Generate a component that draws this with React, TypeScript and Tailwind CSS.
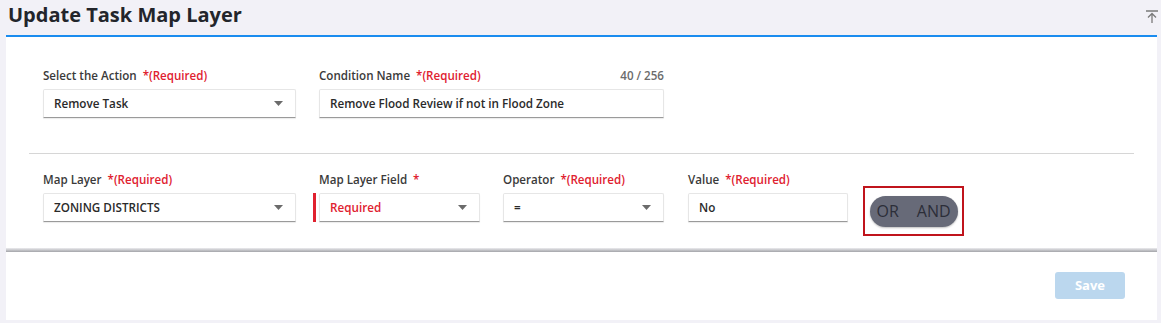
import React from 'react';

const font = { fontFamily: '"Open Sans", "Noto Sans", sans-serif' };

const Req: React.FC<{ full?: boolean }> = ({ full = true }) => (
    <span className="text-[#e0212f] ml-[6px]">*{full ? '(Required)' : ''}</span>
);

const Caret = () => (
    <svg width="9" height="5" viewBox="0 0 9 5" className="shrink-0">
        <path d="M0 0h9L4.5 5z" fill="#6b6b6b" />
    </svg>
);

const Label: React.FC<{ children: React.ReactNode; right?: string }> = ({ children, right }) => (
    <div className="flex items-center justify-between text-[11.6px] leading-[16px] font-semibold text-[#3a3a3a] mb-[5px]">
        <span>{children}</span>
        {right && <span className="text-[#6b6b6b]">{right}</span>}
    </div>
);

const Box: React.FC<{ children: React.ReactNode; select?: boolean; invalid?: boolean }> = ({ children, select, invalid }) => (
    <div className="relative">
        {invalid && <div className="absolute left-[-6px] top-0 h-[29px] w-[3px] bg-[#e0212f]" />}
        <div className="h-[29px] flex items-center justify-between pl-[10px] pr-[12px] bg-white border border-[#e6e6e6] border-b-[#9a9a9a] rounded-t-[2px] shadow-[0_1px_1px_rgba(0,0,0,0.08)] text-[11.7px] font-semibold">
            <span className={invalid ? 'text-[#e0212f]' : 'text-[#2a2a2a]'}>{children}</span>
            {select && <Caret />}
        </div>
    </div>
);

export default function App() {
    return (
        <div className="h-[323px] bg-[#f2f1f7] pl-[6px] pr-[4px] flex flex-col" style={font}>
            <div className="h-[35px] flex items-start justify-between">
                <h1 className="text-[20px] leading-[28px] pt-[1px] pl-[2px] font-bold text-[#23252b]">Update Task Map Layer</h1>
                <svg width="12" height="13" viewBox="0 0 12 13" className="mt-[10px] mr-[-1px]" fill="none" stroke="#7a7a7a" strokeWidth="1.3">
                    <path d="M0 1h12M6 3.5V13M2 7.5l4-4 4 4" />
                </svg>
            </div>
            <div className="h-[2px] bg-[#1a8cef]" />
            <div className="flex-1 bg-white flex flex-col mb-[3px]">
                <div className="pt-[31px] pl-[37px]">
                    <div className="flex gap-[23px]">
                        <div className="w-[253px]">
                            <Label>Select the Action<Req /></Label>
                            <Box select>Remove Task</Box>
                        </div>
                        <div className="w-[345px]">
                            <Label right="40 / 256">Condition Name<Req /></Label>
                            <Box>Remove Flood Review if not in Flood Zone</Box>
                        </div>
                    </div>
                </div>
                <div className="h-px bg-[#d6d6d6] mx-[23px] mt-[35px]" />
                <div className="pt-[18px] pl-[37px] flex items-start h-[94px]">
                    <div className="flex">
                        <div className="w-[253px]">
                            <Label>Map Layer<Req /></Label>
                            <Box select>ZONING DISTRICTS</Box>
                        </div>
                        <div className="w-[161px] ml-[23px]">
                            <Label>Map Layer Field<Req full={false} /></Label>
                            <Box select invalid>Required</Box>
                        </div>
                        <div className="w-[161px] ml-[23px]">
                            <Label>Operator<Req /></Label>
                            <Box select>=</Box>
                        </div>
                        <div className="w-[160px] ml-[24px]">
                            <Label>Value<Req /></Label>
                            <Box>No</Box>
                        </div>
                    </div>
                    <div className="ml-[15px] mt-[14px] w-[101px] h-[50px] border-2 border-[#c0141c] flex items-center justify-center">
                        <div className="w-[88px] h-[31px] rounded-full bg-[#676a78] flex items-center justify-center gap-[18px] text-[16px] text-[#2c2e38] shadow-[0_1px_2px_rgba(0,0,0,0.25)]">
                            <span>OR</span>
                            <span>AND</span>
                        </div>
                    </div>
                </div>
                <div className="h-[4px] bg-gradient-to-b from-[#ececef] to-[#a3a4a9]" />
                <div className="flex justify-end pt-[20px] pr-[32px]">
                    <button className="w-[70px] h-[27px] rounded-[3px] bg-[#bbd7ee] text-white font-bold text-[13px]">Save</button>
                </div>
            </div>
        </div>
    );
}
